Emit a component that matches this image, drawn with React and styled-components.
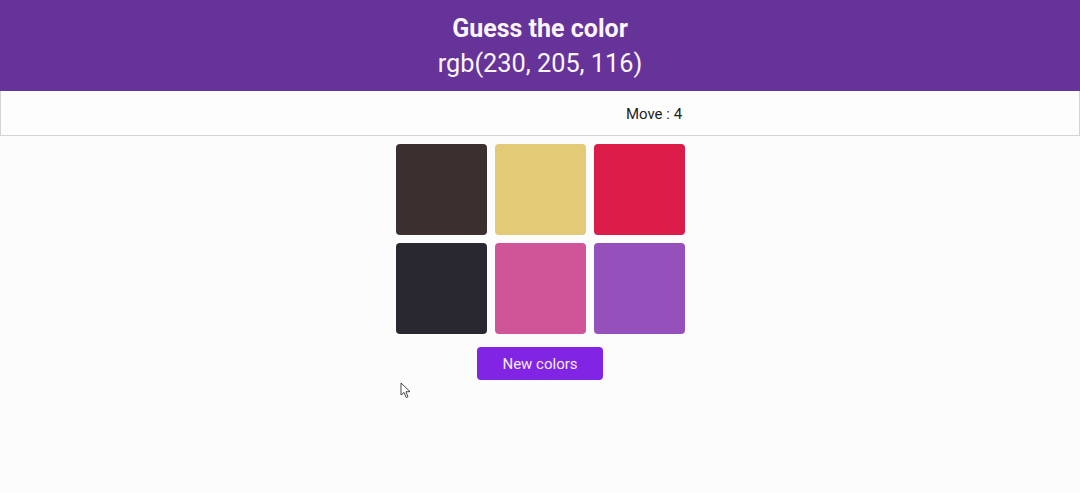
import React from "react";
import styled, { createGlobalStyle } from "styled-components";

const Global = createGlobalStyle`
  html, body { margin: 0; padding: 0; background: #fdfcfd; }
  body { font-family: Roboto, "Noto Sans", sans-serif; }
`;

const Page = styled.div`
  position: relative;
  width: 1080px;
  height: 493px;
  overflow: hidden;
  background: #fdfcfd;
`;

const Header = styled.header`
  background: #663399;
  color: #fbf6fc;
  height: 91px;
  display: flex;
  flex-direction: column;
  align-items: center;
  justify-content: center;
  box-sizing: border-box;
  padding-top: 4px;
`;

const Title = styled.h1`
  margin: 0;
  font-size: 25px;
  font-weight: 700;
  line-height: 32px;
`;

const Target = styled.div`
  font-size: 25.3px;
  line-height: 38px;
  font-weight: 400;
`;

const Bar = styled.div`
  height: 45px;
  box-sizing: border-box;
  border: 1px solid #d4d2d4;
  border-top: none;
  background: #fdfdfd;
  display: flex;
  align-items: center;
  justify-content: center;
  padding-left: 228px;
  padding-top: 1px;
  font-size: 15px;
  color: #1e1e1e;
`;

const Board = styled.main`
  display: flex;
  flex-direction: column;
  align-items: center;
  padding-top: 8px;
`;

const Grid = styled.div`
  display: grid;
  grid-template-columns: repeat(3, 91px);
  grid-auto-rows: 91px;
  gap: 8px;
  margin-left: 1px;
`;

const Swatch = styled.div`
  border-radius: 4px;
  background: ${(p) => p.$color};
`;

const Button = styled.button`
  margin-top: 13px;
  width: 126px;
  height: 33px;
  border: none;
  border-radius: 4px;
  background: #8224e3;
  color: #f4ecfc;
  font-family: Roboto, "Noto Sans", sans-serif;
  font-size: 15px;
  cursor: pointer;
`;

const Cursor = styled.svg`
  position: absolute;
  left: 400px;
  top: 382px;
`;

const colors = ["#3b2f2f", "#e2ca76", "#dc1c48", "#292831", "#d05598", "#9550bc"];

export default function App() {
  return (
    <Page>
      <Global />
      <Header>
        <Title>Guess the color</Title>
        <Target>rgb(230, 205, 116)</Target>
      </Header>
      <Bar>Move : 4</Bar>
      <Board>
        <Grid>
          {colors.map((c, i) => (
            <Swatch key={i} $color={c} />
          ))}
        </Grid>
        <Button>New colors</Button>
      </Board>
      <Cursor width="12" height="18" viewBox="0 0 12 18">
        <path d="M1 1 L1 13 L4 10.5 L6.2 15.5 L8 14.7 L5.9 9.8 L10 9.6 Z" fill="#fff" stroke="#333" strokeWidth="0.9" strokeLinejoin="round" />
      </Cursor>
    </Page>
  );
}
